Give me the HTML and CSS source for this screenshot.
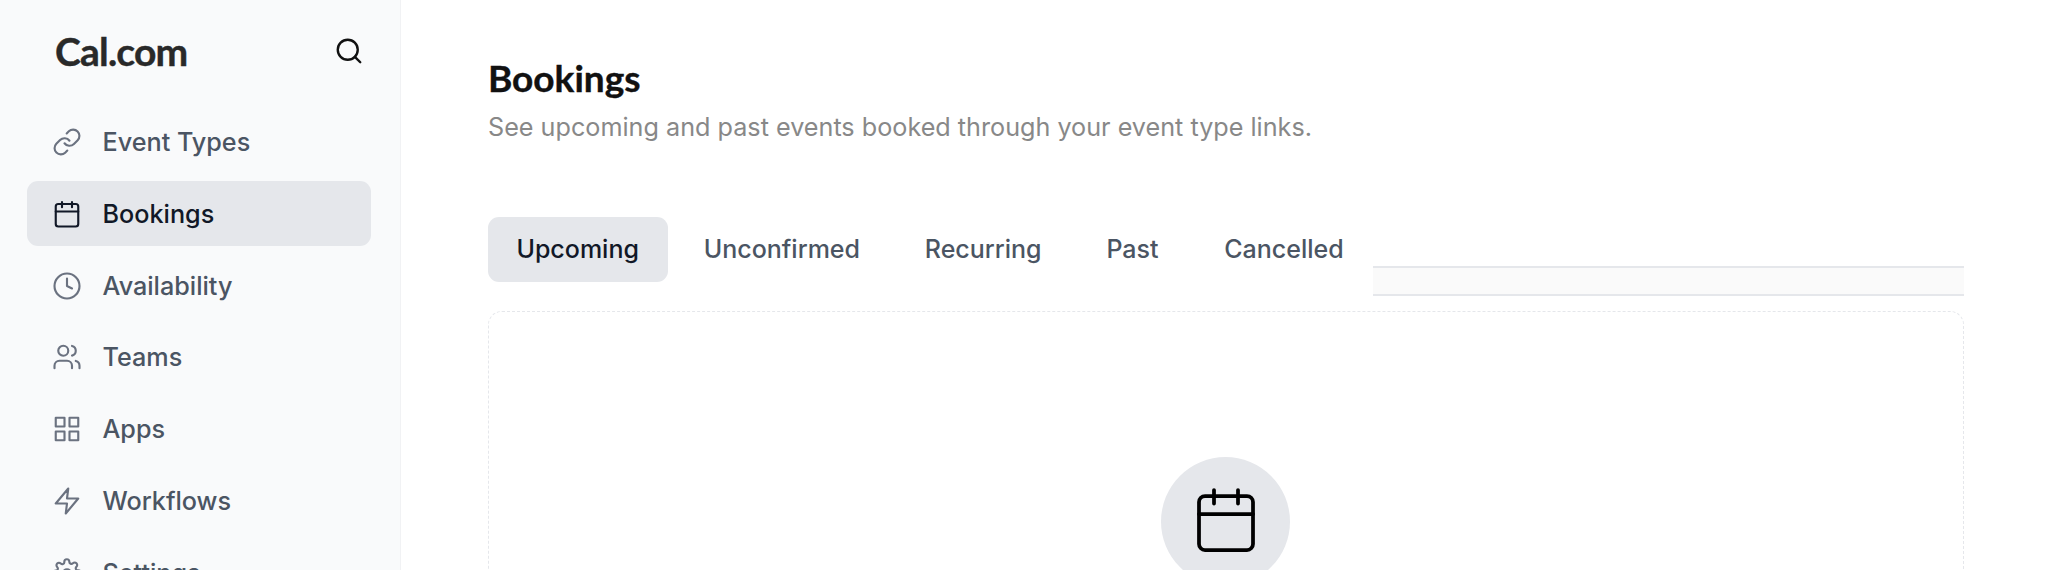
FILE: index.html
```html
<html>
    <head>
        <link rel="stylesheet" href="styles.css">
    </head>
<body>
    <div class="shell">
        <aside class="sidebar">
            <div class="brandRow">
                <span class="logo">Cal.com</span>
                <svg class="searchIcon" viewBox="0 0 24 24"><circle cx="11" cy="11" r="8"/><path d="m21 21-4.3-4.3"/></svg>
            </div>
            <nav class="navList">
                <a class="navItem">
                    <svg class="navIcon" viewBox="0 0 24 24"><path d="M10 13a5 5 0 0 0 7.54.54l3-3a5 5 0 0 0-7.07-7.07l-1.72 1.71"/><path d="M14 11a5 5 0 0 0-7.54-.54l-3 3a5 5 0 0 0 7.07 7.07l1.71-1.71"/></svg>
                    Event Types
                </a>
                <a class="navItem active">
                    <svg class="navIcon" viewBox="0 0 24 24"><rect x="3" y="4" width="18" height="18" rx="2"/><path d="M16 2.5v4M8 2.5v4M3 10h18"/></svg>
                    Bookings
                </a>
                <a class="navItem">
                    <svg class="navIcon" viewBox="0 0 24 24"><circle cx="12" cy="12" r="10"/><path d="M12 6v6l4 2"/></svg>
                    Availability
                </a>
                <a class="navItem">
                    <svg class="navIcon" viewBox="0 0 24 24"><path d="M16 21v-2a4 4 0 0 0-4-4H6a4 4 0 0 0-4 4v2"/><circle cx="9" cy="7" r="4"/><path d="M22 21v-2a4 4 0 0 0-3-3.87"/><path d="M16 3.13a4 4 0 0 1 0 7.75"/></svg>
                    Teams
                </a>
                <a class="navItem">
                    <svg class="navIcon" viewBox="0 0 24 24"><rect x="3" y="3" width="7" height="7"/><rect x="14" y="3" width="7" height="7"/><rect x="14" y="14" width="7" height="7"/><rect x="3" y="14" width="7" height="7"/></svg>
                    Apps
                </a>
                <a class="navItem">
                    <svg class="navIcon" viewBox="0 0 24 24"><path d="M13 2 3 14h9l-1 8 10-12h-9l1-8z"/></svg>
                    Workflows
                </a>
                <a class="navItem">
                    <svg class="navIcon" viewBox="0 0 24 24"><circle cx="12" cy="12" r="3"/><path d="M19.4 15a1.65 1.65 0 0 0 .33 1.82l.06.06a2 2 0 1 1-2.83 2.83l-.06-.06a1.65 1.65 0 0 0-2.82 1.17V21a2 2 0 1 1-4 0v-.09a1.65 1.65 0 0 0-2.82-1.12l-.06.06a2 2 0 1 1-2.83-2.83l.06-.06a1.65 1.65 0 0 0-1.17-2.82H3a2 2 0 1 1 0-4h.09a1.65 1.65 0 0 0 1.12-2.82l-.06-.06a2 2 0 1 1 2.83-2.83l.06.06a1.65 1.65 0 0 0 2.82-1.17V3a2 2 0 1 1 4 0v.09a1.65 1.65 0 0 0 2.82 1.12l.06-.06a2 2 0 1 1 2.83 2.83l-.06.06a1.65 1.65 0 0 0 1.17 2.82H21a2 2 0 1 1 0 4h-.09a1.65 1.65 0 0 0-1.51 1z"/></svg>
                    Settings
                </a>
            </nav>
        </aside>

        <main class="content">
            <h1 class="pageTitle">Bookings</h1>
            <p class="pageSub">See upcoming and past events booked through your event type links.</p>

            <div class="tabRow">
                <a class="tab active">Upcoming</a>
                <a class="tab">Unconfirmed</a>
                <a class="tab">Recurring</a>
                <a class="tab">Past</a>
                <a class="tab">Cancelled</a>
                <div class="tabFill"></div>
            </div>

            <section class="emptyCard">
                <div class="emptyCircle">
                    <svg class="emptyIcon" viewBox="0 0 24 24"><rect x="3" y="4" width="18" height="18" rx="2"/><path d="M16 2v4.5M8 2v4.5M3 10h18"/></svg>
                </div>
            </section>
        </main>
    </div>
</body>

</html>
```

FILE: styles.css
```css
* {
    box-sizing: border-box;
    font-family: "Inter", "Liberation Sans", sans-serif;
}
html, body {
    margin: 0;
    height: 570px;
    overflow: hidden;
    background: #ffffff;
}
.shell {
    display: flex;
    height: 570px;
    overflow: hidden;
}

/* sidebar */
.sidebar {
    width: 401px;
    flex-shrink: 0;
    background: #f9fafb;
    border-right: 1px solid #f1f2f4;
    padding: 0 29px 0 27px;
}
.brandRow {
    display: flex;
    align-items: center;
    justify-content: space-between;
    height: 102px;
    padding: 0 7px 0 28px;
}
.logo {
    font-family: "Lato", sans-serif;
    font-size: 39px;
    font-weight: 700;
    letter-spacing: -0.8px;
    color: #292929;
    -webkit-text-stroke: 0.4px #292929;
}
.searchIcon {
    width: 30px;
    height: 30px;
    fill: none;
    stroke: #111111;
    stroke-width: 1.9;
    stroke-linecap: round;
    stroke-linejoin: round;
}
.navList {
    display: flex;
    flex-direction: column;
    gap: 6.8px;
    margin-top: 7px;
}
.navItem {
    display: flex;
    align-items: center;
    gap: 21px;
    height: 65px;
    padding: 1px 0 0 24.5px;
    border-radius: 11px;
    font-size: 25.2px;
    font-weight: 500;
    color: #4b5563;
}
.navItem.active {
    background: #e5e7eb;
    color: #111827;
}
.navIcon {
    width: 30px;
    height: 30px;
    flex-shrink: 0;
    fill: none;
    stroke: #6b7280;
    stroke-width: 1.7;
    stroke-linecap: round;
    stroke-linejoin: round;
}
.navItem.active .navIcon {
    stroke: #111827;
}

/* main column */
.content {
    flex-grow: 1;
    padding: 54px 86px 0 87px;
}
.pageTitle {
    margin: 0;
    font-family: "Lato", sans-serif;
    font-size: 37px;
    line-height: 48px;
    font-weight: 700;
    color: #111111;
    -webkit-text-stroke: 0.4px #111111;
}
.pageSub {
    margin: 3px 0 0;
    font-size: 25.2px;
    line-height: 44px;
    color: #888888;
}
.tabRow {
    display: flex;
    height: 79px;
    margin-top: 68px;
}
.tab {
    height: 65px;
    margin-right: 8px;
    padding: 0 28.4px;
    border-radius: 11px;
    font-size: 25px;
    font-weight: 500;
    line-height: 65px;
    color: #4b5563;
}
.tab:last-of-type {
    margin-right: 0;
    padding-right: 29px;
}
.tab.active {
    padding-right: 29px;
    margin-right: 7.4px;
    background: #e5e7eb;
    color: #111827;
}
.tab:nth-of-type(4) {
    margin-right: 9px;
}
.tabFill {
    flex-grow: 1;
    height: 30px;
    margin: 49px 0 0 0;
    background: #fafafa;
    border-top: 2px solid #e5e7eb;
    border-bottom: 2px solid #e5e7eb;
}
.emptyCard {
    height: 500px;
    margin-top: 15px;
    padding: 145px 2px 0 0;
    border: 1px dashed #e5e7eb;
    border-radius: 14px;
    display: flex;
    flex-direction: column;
    align-items: center;
}
.emptyCircle {
    width: 129px;
    height: 129px;
    padding: 0 0 3px 2px;
    border-radius: 50%;
    background: #e5e7eb;
    display: flex;
    align-items: center;
    justify-content: center;
}
.emptyIcon {
    width: 72px;
    height: 72px;
    fill: none;
    stroke: #000000;
    stroke-width: 1.25;
    stroke-linecap: round;
    stroke-linejoin: round;
}
```
